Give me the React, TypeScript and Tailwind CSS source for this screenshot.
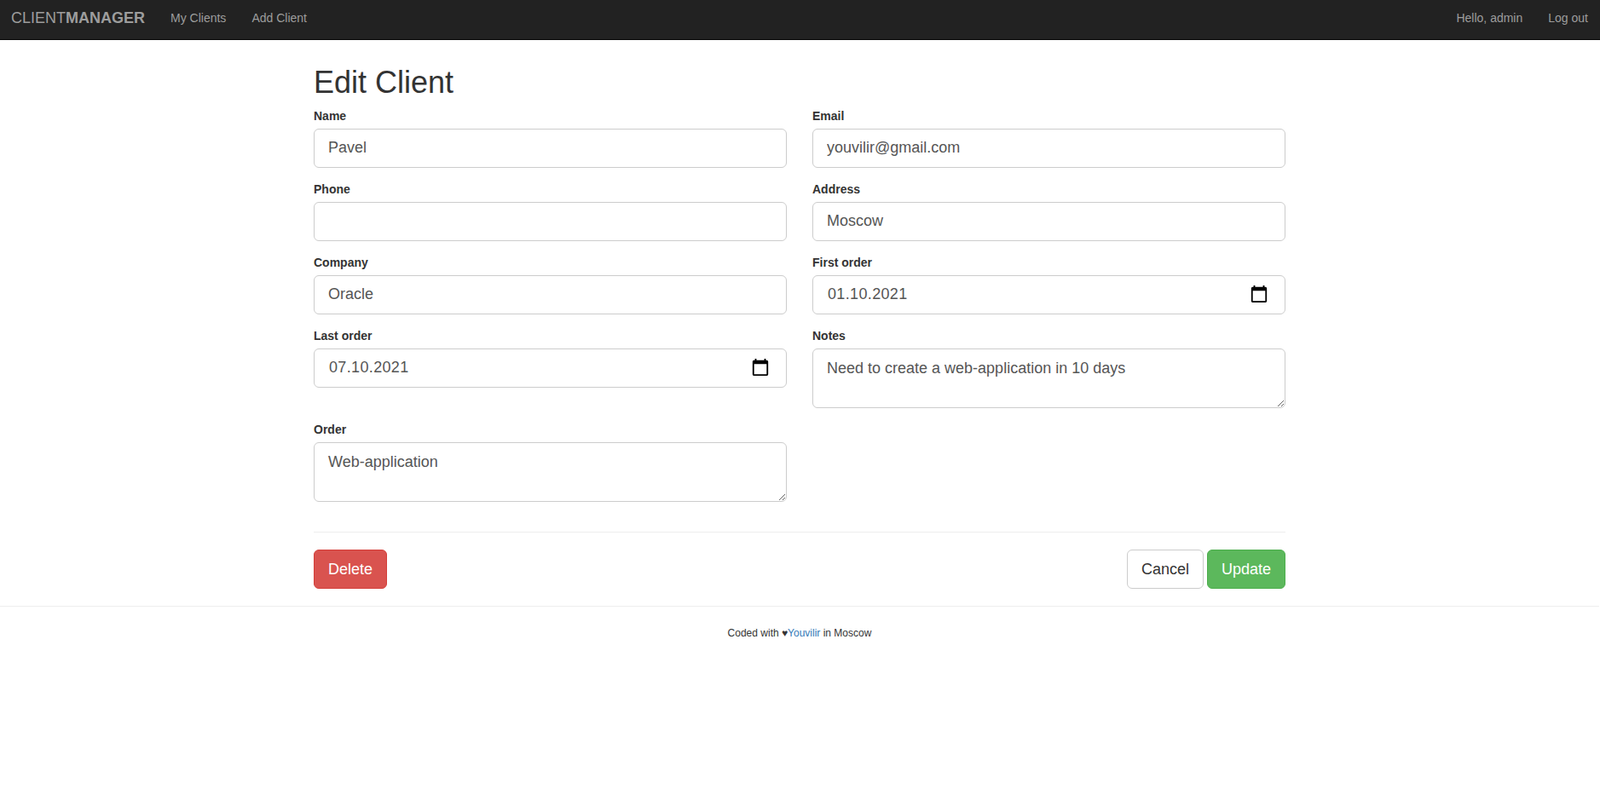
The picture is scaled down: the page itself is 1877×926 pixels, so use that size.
import React from 'react';

const font = "font-['Liberation_Sans',Arial,sans-serif]";
const inputCls = 'w-full h-[46px] px-4 pb-[2px] border border-[#ccc] rounded-[6px] bg-white text-[18px] leading-[24px] text-[#555] outline-none';
const textareaCls = 'block w-full h-[70px] px-4 py-[10px] border border-[#ccc] rounded-[6px] bg-white text-[18px] leading-[24px] text-[#555] outline-none';
const labelCls = 'block mb-[5px] text-[14px] leading-[20px] font-bold text-[#333]';

function Field({ label, value }: { label: string; value?: string }) {
  return (
    <div className="mb-[15px]">
      <label className={labelCls}>{label}</label>
      <input type="text" defaultValue={value} className={inputCls} />
    </div>
  );
}

// Date field: the browser's own date input can't show dd.mm.yyyy here
function DateField({ label, value }: { label: string; value: string }) {
  return (
    <div className="mb-[15px]">
      <label className={labelCls}>{label}</label>
      <div className="relative">
        <input type="text" defaultValue={value} className={`${inputCls} pl-[17px] tracking-[0.35px]`} />
        <svg viewBox="0 0 24 24" className="absolute top-[11px] right-[20px] h-[22px] w-[22px]" fill="#000">
          <path d="M20 3h-1V1h-2v2H7V1H5v2H4c-1.1 0-2 .9-2 2v16c0 1.1.9 2 2 2h16c1.1 0 2-.9 2-2V5c0-1.1-.9-2-2-2zm0 18H4V8h16v13z" />
        </svg>
      </div>
    </div>
  );
}

function AreaField({ label, value }: { label: string; value: string }) {
  return (
    <div className="mb-[15px]">
      <label className={labelCls}>{label}</label>
      <textarea defaultValue={value} className={textareaCls} />
    </div>
  );
}

export default function App() {
  return (
    <div className={`${font} min-h-[926px] bg-white text-[14px] text-[#333]`}>
      {/* Navbar */}
      <nav className="flex h-[47px] items-center justify-between border-b border-[#080808] bg-[#222] pr-[14px] pb-[3px] pl-[13px]">
        <div className="flex items-center">
          <a className="text-[18px] text-[#9d9d9d]">
            CLIENT<b>MANAGER</b>
          </a>
          <a className="ml-[30px] text-[#9d9d9d]">My Clients</a>
          <a className="ml-[30px] text-[#9d9d9d]">Add Client</a>
        </div>
        <div className="flex items-center">
          <a className="text-[#9d9d9d]">Hello, admin</a>
          <a className="ml-[30px] text-[#9d9d9d]">Log out</a>
        </div>
      </nav>

      <div className="pr-px">
        <div className="mx-auto w-[1170px] px-[15px]">
          <h2 className="mt-[30px] mb-[9px] text-[36px] leading-[40px] font-medium">Edit Client</h2>
          <form>
            <div className="grid grid-cols-2 gap-x-[30px]">
              <Field label="Name" value="Pavel" />
              <Field label="Email" value="youvilir@gmail.com" />
              <Field label="Phone" />
              <Field label="Address" value="Moscow" />
              <Field label="Company" value="Oracle" />
              <DateField label="First order" value="01.10.2021" />
              <DateField label="Last order" value="07.10.2021" />
              <AreaField label="Notes" value="Need to create a web-application in 10 days" />
              <AreaField label="Order" value="Web-application" />
            </div>
            <hr className="mt-[20px] mb-[20px] border-t border-[#eee]" />
            <div className="flex justify-between pb-5">
              <button type="button" className="h-[46px] rounded-[6px] border border-[#d43f3a] bg-[#d9534f] px-4 text-[18px] text-white">Delete</button>
              <div className="flex gap-1">
                <button type="button" className="h-[46px] rounded-[6px] border border-[#ccc] bg-white px-4 text-[18px] text-[#333]">Cancel</button>
                <button type="button" className="h-[46px] rounded-[6px] border border-[#4cae4c] bg-[#5cb85c] px-4 text-[18px] text-white">Update</button>
              </div>
            </div>
          </form>
        </div>

        <footer className="border-t border-[#eee] pt-[22px] text-center text-[12px]">
          Coded with ♥<a className="text-[#337ab7]">Youvilir</a> in Moscow
        </footer>
      </div>
    </div>
  );
}
